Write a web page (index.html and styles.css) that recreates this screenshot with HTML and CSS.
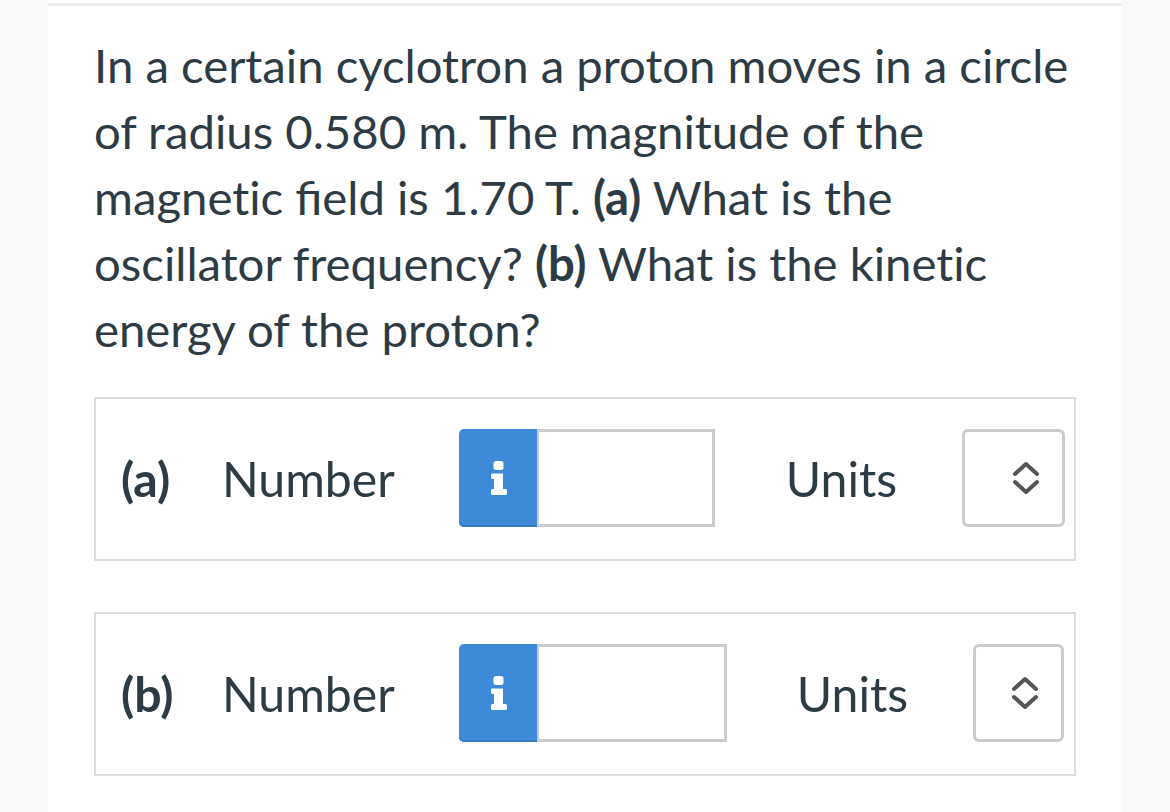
FILE: index.html
```html
<!DOCTYPE html>
<html>
<head>
<meta charset="utf-8">
<link rel="stylesheet" href="styles.css">
</head>
<body>
<div class="page">
  <div class="content">
    <p class="question">In a certain cyclotron a proton moves in a circle of radius 0.580 m. The magnitude of the magnetic ﬁeld is 1.70 T. <b>(a)</b> What is the oscillator frequency? <b>(b)</b> What is the kinetic energy of the proton?</p>

    <div class="answer answer-a">
      <span class="part">(a)</span>
      <span class="label">Number</span>
      <span class="info"><svg width="16" height="34" viewBox="0 0 16 34"><rect x="2.5" y="0" width="10" height="9" rx="2.5" fill="#fff"/><path d="M1 12.5 H12 V28 H14.5 A1.5 1.5 0 0 1 16 29.5 V32.5 A1.5 1.5 0 0 1 14.5 34 H1.5 A1.5 1.5 0 0 1 0 32.5 V29.5 A1.5 1.5 0 0 1 1.5 28 H3 V18 H1.5 A1.5 1.5 0 0 1 0 16.5 V14 A1.5 1.5 0 0 1 1 12.5 Z" fill="#fff"/></svg></span>
      <span class="input"></span>
      <span class="units">Units</span>
      <span class="select"><svg width="28" height="34" viewBox="0 0 28 34"><path d="M3 13 L14 3 L25 13 M3 21 L14 31 L25 21" fill="none" stroke="#555" stroke-width="4" stroke-linecap="round" stroke-linejoin="round"/></svg></span>
    </div>

    <div class="answer answer-b">
      <span class="part">(b)</span>
      <span class="label">Number</span>
      <span class="info"><svg width="16" height="34" viewBox="0 0 16 34"><rect x="2.5" y="0" width="10" height="9" rx="2.5" fill="#fff"/><path d="M1 12.5 H12 V28 H14.5 A1.5 1.5 0 0 1 16 29.5 V32.5 A1.5 1.5 0 0 1 14.5 34 H1.5 A1.5 1.5 0 0 1 0 32.5 V29.5 A1.5 1.5 0 0 1 1.5 28 H3 V18 H1.5 A1.5 1.5 0 0 1 0 16.5 V14 A1.5 1.5 0 0 1 1 12.5 Z" fill="#fff"/></svg></span>
      <span class="input"></span>
      <span class="units">Units</span>
      <span class="select"><svg width="28" height="34" viewBox="0 0 28 34"><path d="M3 13 L14 3 L25 13 M3 21 L14 31 L25 21" fill="none" stroke="#555" stroke-width="4" stroke-linecap="round" stroke-linejoin="round"/></svg></span>
    </div>
  </div>
</div>
</body>
</html>
```

FILE: styles.css
```css
html, body {
  margin: 0;
  padding: 0;
  background: #f9f9f9;
}
body {
  font-family: Lato, "Open Sans", sans-serif;
  color: #2d3b45;
  font-variant-ligatures: none;
}
.page {
  margin: 0 48px;
  background: #fff;
  padding-top: 3px;
  min-height: 809px;
}
.content {
  border-top: 3px solid #ececec;
  padding: 26px 46px 20px 46px;
}
.question {
  margin: 0 0 35px 0;
  font-size: 47.3px;
  line-height: 66px;
}
.question b {
  font-weight: 700;
}
.answer {
  display: flex;
  align-items: center;
  border: 2px solid #dddddd;
  padding: 30px 10px 32px 25px;
  font-size: 48.2px;
  margin-bottom: 51px;
}
.part {
  font-weight: 700;
  width: 101px;
  flex: none;
}
.label {
  flex: none;
}
.info {
  flex: none;
  width: 78px;
  height: 98px;
  background: #3d8ad9;
  border-radius: 5px 0 0 5px;
  box-shadow: inset 0 -2px 0 #357bc4;
  display: flex;
  align-items: center;
  justify-content: center;
  margin-left: 64px;
}
.info svg {
  margin-left: 2px;
}
.input {
  flex: none;
  height: 98px;
  box-sizing: border-box;
  border: 3px solid #cccccc;
  border-left: 2px solid #cccccc;
  background: #fff;
}
.units {
  flex: none;
  margin-left: 71px;
}
.select {
  flex: none;
  box-sizing: border-box;
  height: 98px;
  border: 3px solid #cccccc;
  border-radius: 6px;
  margin-left: 65px;
  display: flex;
  align-items: center;
  justify-content: flex-end;
  padding-right: 22px;
}
.answer-a .input { width: 178px; }
.answer-a .select { width: 103px; }
.answer-b .input { width: 190px; }
.answer-b .select { width: 91px; }
.answer-b .info { margin-left: 64px; }
.answer-b .units { margin-left: 70px; }
```
